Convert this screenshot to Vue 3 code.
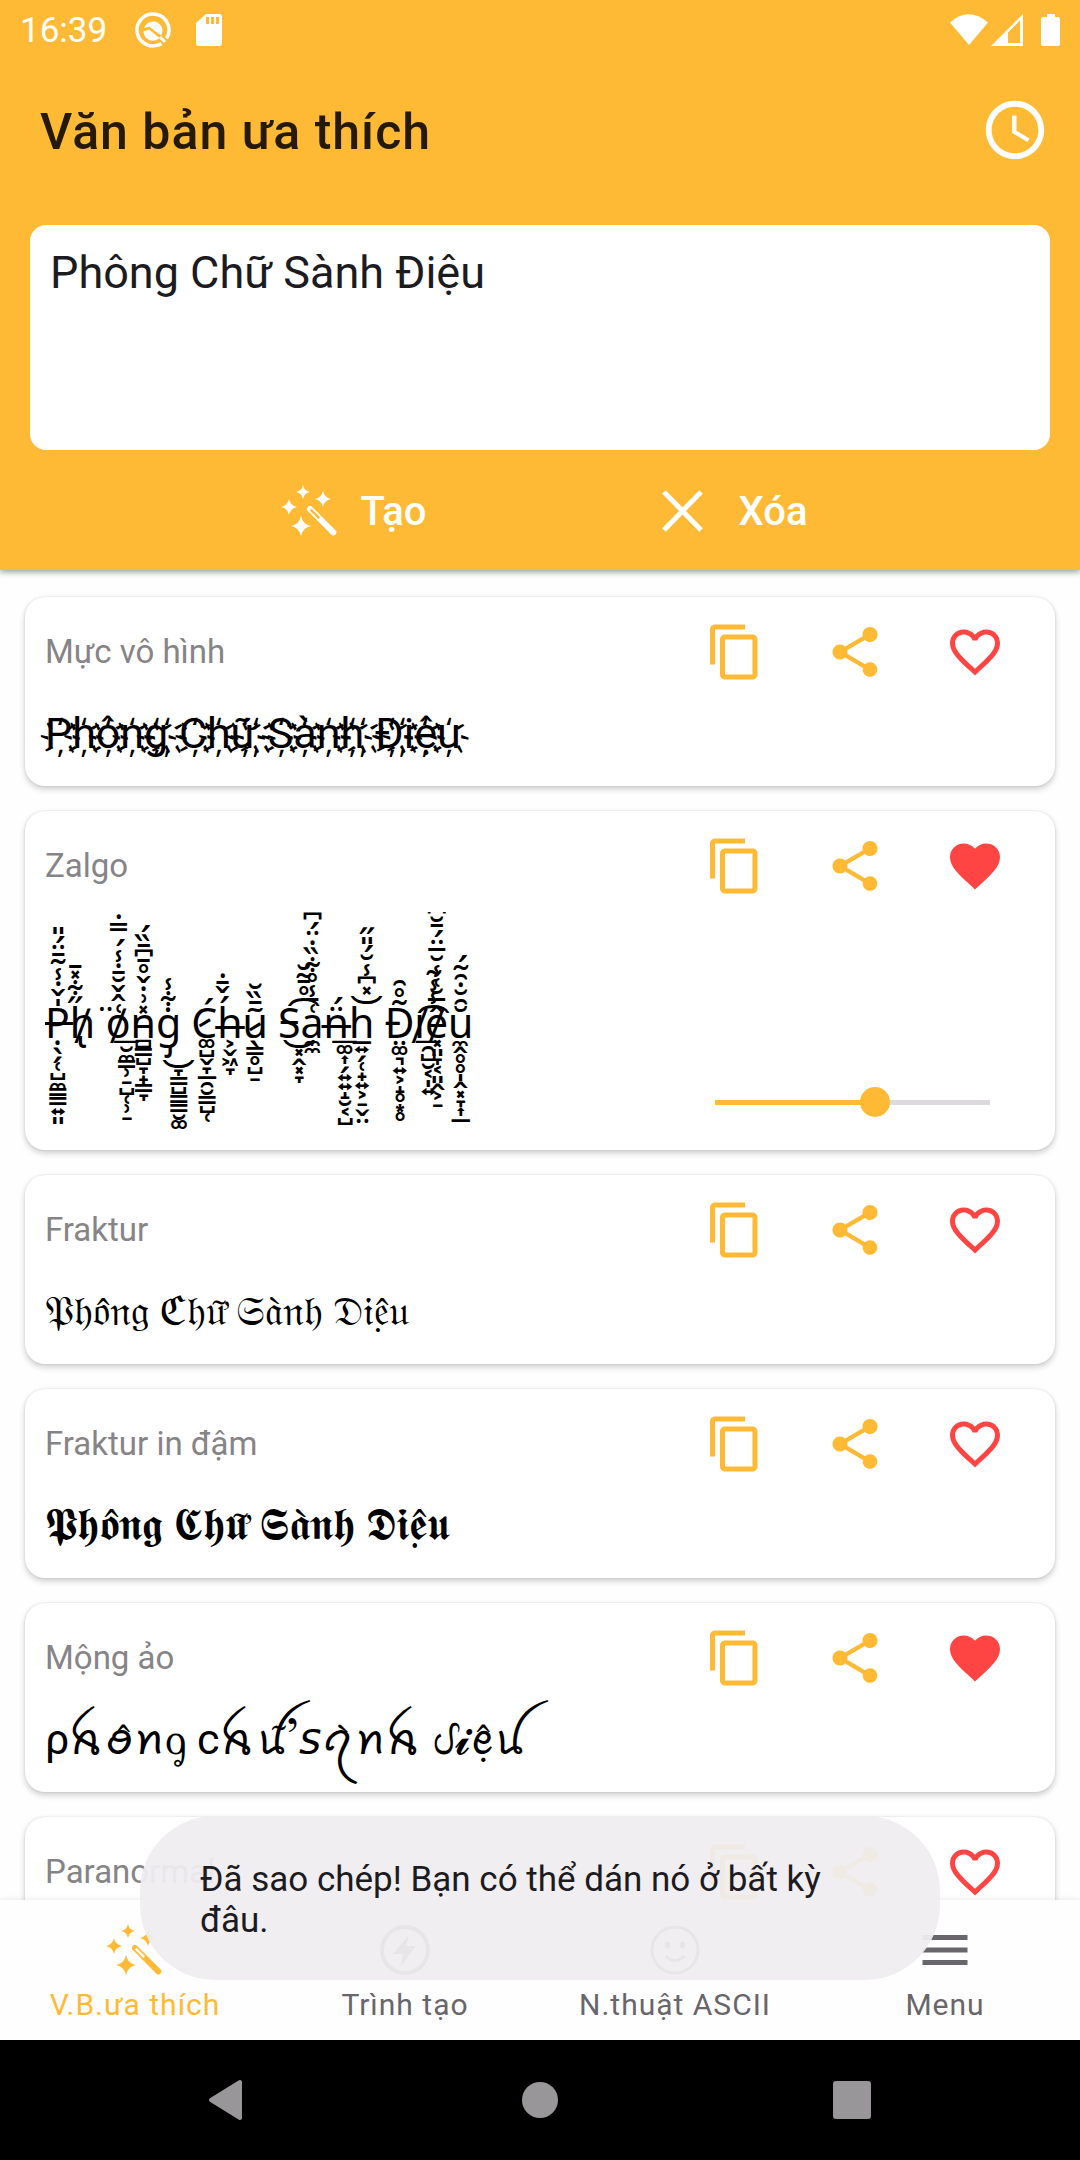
<template>
  <div class="app">
    <header class="header">
      <div class="status-bar">
        <span class="time">16:39</span>
        <svg class="status-q" width="36" height="36" viewBox="0 0 36 36">
          <path d="M26.5 31.5A16 16 0 1 1 31.5 26.5" fill="none" stroke="#fff" stroke-width="3.5" />
          <path d="M9 16a9.500 9.500 0 0 1 18.500 2q0 3-1.500 5.500L14 14.500zM8.500 19.500l5.500-2 10.500 8.500A9.500 9.500 0 0 1 8.500 19.500z" fill="#fff" />
          <path d="M25 25l5 5" stroke="#fff" stroke-width="3" />
        </svg>
        <svg class="status-sd" width="28" height="34" viewBox="0 0 28 34">
          <path
              d="M11 1h13a3 3 0 0 1 3 3v26a3 3 0 0 1-3 3H4a3 3 0 0 1-3-3V10zM11 4v7h3V4zM16 4v7h3V4zM21 4v7h3V4z"
              fill="#fff"
              fill-rule="evenodd"
          />
        </svg>
        <span class="spacer" />
        <svg width="112" height="34" viewBox="0 0 112 34">
          <path d="M0 9.500Q18.500-7 38 9.500L19 32z" fill="#fff" />
          <path d="M41 33L73 1v32zM58 19.500V30h12V7.500z" fill="#fff" fill-rule="evenodd" />
          <path d="M97 1h8v3h3a2 2 0 0 1 2 2v25a2 2 0 0 1-2 2H93a2 2 0 0 1-2-2V6a2 2 0 0 1 2-2h4z" fill="#fff" />
        </svg>
      </div>

      <div class="title-row">
        <h1 class="title">Văn bản ưa thích</h1>
        <button class="icon-button" type="button" aria-label="Lịch sử">
          <svg width="70" height="70" viewBox="0 0 24 24">
            <path :d="icons.clock" fill="#fff" />
          </svg>
        </button>
      </div>

      <textarea v-model="text" class="editor" aria-label="Văn bản" spellcheck="false" />

      <div class="actions">
        <button class="action" type="button">
          <svg width="60" height="60" viewBox="0 0 60 60">
            <path v-for="star in stars" :key="star" :d="star" fill="currentColor" />
            <path :d="icons.wand" transform="translate(30 28) rotate(45)" fill="currentColor" fill-rule="evenodd" />
          </svg>
          Tạo
        </button>
        <button class="action clear" type="button" @click="text = ''">
          <svg width="60" height="60" viewBox="0 0 60 60">
            <path d="M12 11l37 38M49 11L12 49" stroke="currentColor" stroke-width="5" />
          </svg>
          Xóa
        </button>
      </div>
    </header>

    <main class="list">
      <article v-for="card in cards" :key="card.name" class="card">
        <div class="card-head">
          <h2 class="card-name">{{ card.name }}</h2>
          <button class="icon-button copy" type="button" aria-label="Sao chép">
            <svg width="60" height="60" viewBox="0 0 24 24"><path :d="icons.copy" fill="currentColor" /></svg>
          </button>
          <button class="icon-button share" type="button" aria-label="Chia sẻ">
            <svg width="60" height="60" viewBox="0 0 24 24"><path :d="icons.share" fill="currentColor" /></svg>
          </button>
          <button
              class="icon-button heart"
              type="button"
              aria-label="Yêu thích"
              @click="card.liked = !card.liked"
          >
            <svg width="60" height="60" viewBox="0 0 24 24">
              <path :d="card.liked ? icons.heart : icons.heartOutline" fill="currentColor" />
            </svg>
          </button>
        </div>
        <div class="card-body">
          <p class="sample" :class="card.kind">{{ card.sample }}</p>
          <input
              v-if="card.kind === 'zalgo'"
              v-model="level"
              class="slider"
              type="range"
              min="0"
              max="100"
              aria-label="Mức độ"
              :style="{ '--fill': level + '%' }"
          >
        </div>
      </article>
    </main>

    <nav class="tabs">
      <a class="tab active" href="#favorites">
        <svg width="60" height="60" viewBox="0 0 60 60">
          <path v-for="star in stars" :key="star" :d="star" fill="currentColor" />
          <path :d="icons.wand" transform="translate(30 28) rotate(45)" fill="currentColor" fill-rule="evenodd" />
        </svg>
        V.B.ưa thích
      </a>
      <a class="tab" href="#generator">
        <svg width="60" height="60" viewBox="0 0 60 60">
          <circle cx="30" cy="30" r="23" fill="none" stroke="currentColor" stroke-width="4" />
          <path d="M34 15L18 34h10l-2 12 15-20H31z" fill="currentColor" />
        </svg>
        Trình tạo
      </a>
      <a class="tab" href="#ascii">
        <svg width="60" height="60" viewBox="0 0 60 60">
          <circle cx="30" cy="30" r="23" fill="none" stroke="currentColor" stroke-width="3" />
          <ellipse cx="22.500" cy="25" rx="2.500" ry="3.500" fill="currentColor" />
          <ellipse cx="37.500" cy="25" rx="2.500" ry="3.500" fill="currentColor" />
          <path d="M20.500 36q9.500 9 19 0" fill="none" stroke="currentColor" stroke-width="3" />
        </svg>
        N.thuật ASCII
      </a>
      <a class="tab" href="#menu">
        <svg width="60" height="60" viewBox="0 0 24 24"><path :d="icons.menu" fill="currentColor" /></svg>
        Menu
      </a>
      <div class="toast" role="status">Đã sao chép! Bạn có thể dán nó ở bất kỳ đâu.</div>
    </nav>

    <div class="system-bar">
      <button class="icon-button" type="button" aria-label="Quay lại">
        <svg width="60" height="60" viewBox="0 0 60 60">
          <path d="M13 30L42 12v36z" fill="#999699" stroke="#999699" stroke-width="4" stroke-linejoin="round" />
        </svg>
      </button>
      <button class="icon-button" type="button" aria-label="Màn hình chính">
        <svg width="60" height="60" viewBox="0 0 60 60"><circle cx="30" cy="30" r="18" fill="#999699" /></svg>
      </button>
      <button class="icon-button" type="button" aria-label="Gần đây">
        <svg width="60" height="60" viewBox="0 0 60 60">
          <rect x="11" y="11" width="38" height="38" rx="3" fill="#999699" />
        </svg>
      </button>
    </div>
  </div>
</template>

<script setup>
import { ref, reactive } from 'vue';

const text = ref('Phông Chữ Sành Điệu');
const level = ref(59);

const icons = {
  clock: 'M11.990 2C6.470 2 2 6.480 2 12s4.470 10 9.990 10C17.520 22 22 17.520 22 12S17.520 2 11.990 2zM12 20c-4.420 0-8-3.580-8-8s3.580-8 8-8 8 3.580 8 8-3.580 8-8 8zM12.500 7H11v6l5.250 3.150.750-1.230-4.500-2.670z',
  copy: 'M16 1H4c-1.100 0-2 .9-2 2v14h2V3h12V1zm3 4H8c-1.100 0-2 .9-2 2v14c0 1.100.9 2 2 2h11c1.100 0 2-.9 2-2V7c0-1.100-.9-2-2-2zm0 16H8V7h11v14z',
  share: 'M18 16.080c-.760 0-1.440.3-1.960.770L8.910 12.700c.050-.230.090-.460.090-.7s-.040-.470-.090-.7l7.050-4.110c.540.5 1.250.810 2.040.810 1.660 0 3-1.340 3-3s-1.340-3-3-3-3 1.340-3 3c0 .240.040.470.090.7L8.040 9.810C7.500 9.310 6.790 9 6 9c-1.660 0-3 1.340-3 3s1.340 3 3 3c.790 0 1.500-.310 2.040-.810l7.120 4.160c-.050.210-.080.430-.080.650 0 1.610 1.310 2.920 2.920 2.920s2.920-1.310 2.920-2.920-1.310-2.920-2.920-2.920z',
  heart: 'M12 21.350l-1.450-1.320C5.400 15.360 2 12.280 2 8.500 2 5.420 4.420 3 7.500 3c1.740 0 3.410.810 4.500 2.090C13.090 3.810 14.760 3 16.500 3 19.580 3 22 5.420 22 8.500c0 3.780-3.400 6.860-8.550 11.540z',
  heartOutline: 'M16.500 3c-1.740 0-3.410.810-4.500 2.090C10.910 3.810 9.240 3 7.500 3 4.420 3 2 5.420 2 8.500c0 3.780 3.400 6.860 8.550 11.540L12 21.350l1.450-1.320C18.600 15.360 22 12.280 22 8.500 22 5.420 19.580 3 16.500 3zm-4.400 15.550l-.1.1-.1-.1C7.140 14.240 4 11.390 4 8.500 4 6.500 5.500 5 7.500 5c1.540 0 3.040.990 3.570 2.360h1.870C13.460 5.990 14.960 5 16.500 5c2 0 3.500 1.500 3.500 3.500 0 2.890-3.140 5.740-7.900 10.050z',
  menu: 'M3 18h18v-2H3v2zm0-5h18v-2H3v2zm0-7v2h18V6H3z',
  wand: 'M0-3H33a3 3 0 0 1 0 6H0a3 3 0 0 1 0-6zM1-1.200V1.200H13V-1.200z'
};

// four-point sparkle around a centre
const sparkle = (x, y, r) => {
  const k = r / 6;
  return `M${x} ${y - r}Q${x + k} ${y - k} ${x + r} ${y}Q${x + k} ${y + k} ${x} ${y + r}Q${x - k} ${y + k} ${x - r} ${y}Q${x - k} ${y - k} ${x} ${y - r}z`;
};

const stars = [
  sparkle(23, 11, 7),
  sparkle(9, 26, 8),
  sparkle(21, 45, 10),
  sparkle(43, 18, 8)
];

// base letter, marks above (bottom to top), marks below (top to bottom);
// \u034f keeps the double-width ties next to the letter
const zalgoParts = [
  ['P\u0336', '\u030d\u030c\u0307\u033e\u0303\u0304\u0308\u0301\u030e', '\u0323\u0316\u0317\u031c\u033a\u033c\u0333\u0333\u034d\u0348'],
  ['h\u0322\u0338', '\u030b\u034b\u033d\u0304', ''],
  [' ', '\u0308', ''],
  ['o\u0338\u035f\u034f', '\u0351\u0302\u030c\u0306\u0304\u0307\u033e\u0301\u033f\u0307', '\u032e\u033c\u0333\u0339\u0320\u033a\u031c\u0339\u0320'],
  ['n\u0335', '\u033d\u0357\u0307\u030c\u030a\u0304\u0346\u0304\u030f\u0301', '\u033b\u0333\u033a\u031e\u031f\u0333\u031e'],
  ['g\u0321\u035c\u034f', '\u0307\u034b\u033e', '\u031e\u0347\u033a\u0333\u0333\u032e\u035a\u032c\u0329'],
  [' ', '', ''],
  ['C\u0337', '\u0301', '\u035a\u033a\u032c\u031e\u0332\u032f\u032e\u0333\u033a\u031c'],
  ['h\u0336', '\u0301\u030c\u0304\u0307', '\u0355\u032c\u0356\u031e'],
  ['u\u0337', '\u0303\u0304\u030f\u0306', '\u0316\u0333\u0325\u033a\u0320'],
  [' ', '', ''],
  ['S\u0335\u035c\u0361\u034f', '\u030a\u0304\u0303\u0306', '\u0353\u032d\u0353\u031e'],
  ['a', '\u0351\u0304\u033e\u030a\u034b\u030f\u0307\u0308\u0301\u0346\u0346', '\u033c\u033c'],
  ['n\u0336\u035f\u034f', '\u0308\u0301', '\u035a\u034e\u0317\u034d\u034d\u031d\u032e\u0354\u033a'],
  ['h\u0332\u035d\u034f', '\u033d\u0346\u033e\u0306\u0301\u030e\u030b', '\u034d\u0317\u031c\u031f\u034d\u0355\u0320\u032c\u0324'],
  [' ', '', ''],
  ['Đ', '\u0303\u030a\u0311', '\u0324\u035a\u0349\u034d\u0355\u031d\u0325\u0359\u0325'],
  ['i\u0338\u035f\u0361\u034f', '\u033e\u033e\u0303', '\u032f\u033a\u032e\u0354\u0329\u034d'],
  ['e\u0338', '\u0302\u0305\u0306\u0351\u033e\u0306\u0305\u0308\u0301\u0304\u0306\u0346', '\u0353\u0348\u031e\u0354\u0348\u032d\u0355\u0320'],
  ['u', '\u0306\u0311\u0306\u0307\u0311\u0303\u0301', '\u033c\u032d\u0325\u0325\u0329\u032d\u0353\u031e\u034e\u0332']
];

const zalgo = zalgoParts.map(part => part.join('')).join('');

const cards = reactive([
  { name: 'Mực vô hình', kind: 'ink', liked: false, sample: [...'Phông Chữ Sành Điệu'].map(c => c + '\u0489').join('') },
  { name: 'Zalgo', kind: 'zalgo', liked: true, sample: zalgo },
  { name: 'Fraktur', kind: 'fraktur', liked: false, sample: '𝔓𝔥𝔬\u0302𝔫𝔤 ℭ𝔥𝔲\u031b\u0303 𝔖𝔞\u0300𝔫𝔥 𝔇𝔦𝔢\u0323\u0302𝔲' },
  { name: 'Fraktur in đậm', kind: 'fraktur-bold', liked: false, sample: '𝕻𝖍𝖔\u0302𝖓𝖌 𝕮𝖍𝖚\u031b\u0303 𝕾𝖆\u0300𝖓𝖍 𝕯𝖎𝖊\u0323\u0302𝖚' },
  { name: 'Mộng ảo', kind: 'dream', liked: true, sample: 'ρꫝꪮ\u0302ꪀᧁ cꫝꪊ\u031b\u0303 𝘴ꪖ\u0300ꪀꫝ ᦔ𝓲ꫀ\u0323\u0302ꪊ' },
  { name: 'Paranormal', kind: 'plain', liked: false, sample: 'Phông Chữ Sành Điệu' }
]);
</script>

<style>
body {
  background: #000;
}
</style>

<style scoped>
.app {
  display: flex;
  flex-direction: column;
  height: 100vh;
  background: #fffeff;
  font-family: Roboto, "Noto Sans", "DejaVu Sans", sans-serif;
  color: #000;
}

svg {
  display: block;
}

button {
  padding: 0;
  border: 0;
  background: none;
  color: inherit;
  font: inherit;
}

.header {
  position: relative;
  z-index: 1;
  flex: none;
  padding: 0 30px;
  background: #ffba35;
  box-shadow: 0 2px 6px rgba(0, 0, 0, 0.4);
}

.status-bar {
  display: flex;
  align-items: center;
  height: 60px;
  margin: 0 -12px 0 -10px;
  color: #fff;
}

.time {
  font-size: 35px;
}

.status-q {
  margin-left: 28px;
}

.status-sd {
  margin-left: 24px;
}

.spacer {
  flex: 1;
}

.title-row {
  display: flex;
  align-items: center;
  justify-content: space-between;
  height: 140px;
}

.title {
  margin: 0 10px;
  padding-top: 4px;
  font-size: 50px;
  font-weight: 500;
  letter-spacing: 1px;
  color: #241a05;
}

.editor {
  display: block;
  box-sizing: border-box;
  width: 100%;
  height: 225px;
  margin-top: 25px;
  padding: 21px 20px;
  border: 0;
  border-radius: 16px;
  outline: 0;
  background: #fff;
  color: #1c1b1f;
  font: 45px/54px Roboto, "Noto Sans", sans-serif;
  resize: none;
}

.actions {
  display: flex;
  justify-content: center;
  gap: 226px;
  padding: 31px 0 29px 8px;
}

.action {
  display: flex;
  align-items: center;
  gap: 20px;
  color: #fff;
  font-size: 40px;
  font-weight: 500;
}

.action.clear {
  gap: 26px;
}

.list {
  flex: 1;
  min-height: 0;
  overflow: hidden;
  padding: 27px 25px 0;
}

.card {
  margin-bottom: 25px;
  padding-bottom: 20px;
  border-radius: 20px;
  background: #fff;
  box-shadow: 0 3px 6px rgba(0, 0, 0, 0.2), 0 0 2px rgba(0, 0, 0, 0.12);
}

.card-head {
  display: flex;
  align-items: center;
  gap: 60px;
  padding: 25px 50px 0 20px;
}

.card-name {
  flex: 1;
  margin: 0;
  font-size: 33px;
  font-weight: 400;
  line-height: 58px;
  color: #868487;
}

.copy,
.share {
  color: #ffba35;
}

.heart {
  color: #ff4444;
}

.card-body {
  display: flex;
  align-items: flex-end;
  justify-content: space-between;
  padding: 16px 65px 0 20px;
}

.sample {
  margin: 0;
  font-size: 43px;
  line-height: 70px;
  height: 68px;
  white-space: pre;
}

.sample.fraktur {
  font-size: 41px;
}

.sample.fraktur-bold {
  font-size: 45px;
}

.sample.zalgo {
  box-sizing: border-box;
  height: 218px;
  padding-top: 10px;
  font-size: 41px;
  line-height: 204px;
  overflow: hidden;
}

.slider {
  appearance: none;
  width: 275px;
  height: 30px;
  margin: 0 0 13px;
  background: linear-gradient(to right, #ffba35 var(--fill), #dddadd var(--fill)) center / 100% 5px no-repeat;
}

.slider::-webkit-slider-thumb {
  appearance: none;
  width: 30px;
  height: 30px;
  border-radius: 50%;
  background: #ffba35;
}

.tabs {
  position: relative;
  display: grid;
  grid-template-columns: repeat(4, 1fr);
  flex: none;
  height: 140px;
  background: #fffeff;
  box-shadow: 0 0 6px rgba(0, 0, 0, 0.1);
}

.tab {
  display: flex;
  flex-direction: column;
  align-items: center;
  padding-top: 20px;
  color: #68666a;
  font-size: 30px;
  line-height: 50px;
  letter-spacing: 1px;
  text-decoration: none;
}

.tab.active {
  color: #ffba35;
}

.toast {
  position: absolute;
  right: 140px;
  bottom: 60px;
  left: 140px;
  padding: 43px 60px 39px;
  border-radius: 75px;
  background: rgba(239, 237, 240, 0.94);
  color: #1c1b1f;
  font-size: 35px;
  line-height: 41px;
}

.system-bar {
  display: flex;
  align-items: center;
  justify-content: space-around;
  flex: none;
  height: 120px;
  padding: 0 72px;
  background: #000;
}
</style>
